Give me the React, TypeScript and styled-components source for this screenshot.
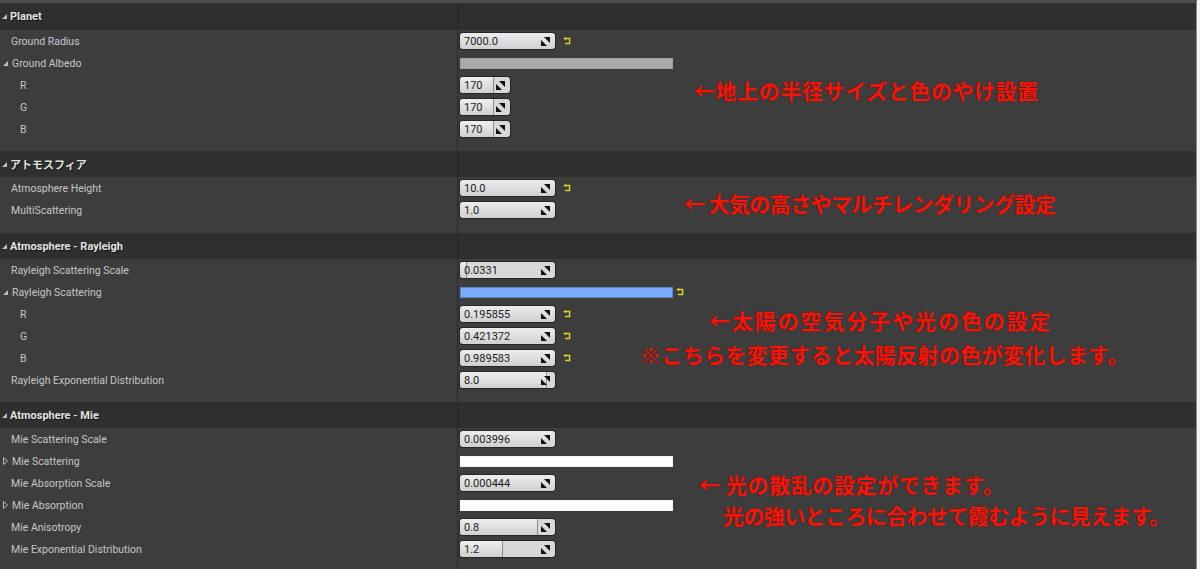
import styled, { createGlobalStyle } from "styled-components";

const GlobalStyle = createGlobalStyle`
  html, body { margin: 0; padding: 0; background: #f2f2f2; }
  body { font-family: Roboto, "Noto Sans CJK JP", sans-serif; }
`;

const Panel = styled.div`
  position: relative;
  width: 1197px;
  height: 569px;
  box-sizing: border-box;
  overflow: hidden;
  background: #3d3d3d;
  border-top: 3px solid #4e4e4e;
  border-right: 1px solid #8c8c8c;
`;

const HeaderRow = styled.div<{ $h: number }>`
  display: grid;
  grid-template-columns: 458px 1fr;
  height: ${(p) => p.$h}px;
  background: #2f2f2f;
`;

const HeaderLabel = styled.div`
  display: flex;
  align-items: center;
  gap: 3px;
  padding-left: 2px;
  border-right: 1px solid #242424;
  font-size: 11px;
  font-weight: 700;
  color: #e2e2e2;
  text-shadow: 1px 1px 0 #151515;
`;

const Row = styled.div<{ $h?: number }>`
  display: grid;
  grid-template-columns: 458px 1fr;
  height: ${(p) => p.$h ?? 22}px;
`;

const LabelCell = styled.div<{ $indent: number }>`
  display: flex;
  align-items: center;
  gap: 4px;
  padding-left: ${(p) => p.$indent}px;
  border-right: 1px solid #2a2a2a;
  font-size: 10.5px;
  color: #c6c6c6;
`;

const ValueCell = styled.div`
  display: flex;
  align-items: center;
  gap: 8px;
  padding-left: 2px;
`;

const SpinBox = styled.div<{ $w: number; $plain: boolean }>`
  position: relative;
  width: ${(p) => p.$w}px;
  height: 16px;
  box-sizing: border-box;
  display: flex;
  align-items: center;
  justify-content: space-between;
  padding: 0 5px 0 4px;
  border-radius: 3px;
  overflow: hidden;
  background: ${(p) =>
    p.$plain ? "linear-gradient(#ececec, #d0d0d0)" : "#d8d8d8"};
  box-shadow: 0 0 0 1px #262626;
`;

const SpinFill = styled.div`
  position: absolute;
  left: 0;
  top: 0;
  bottom: 0;
  background: linear-gradient(#efefef, #d0d0d0);
  border-right: 1px solid #8e8e8e;
`;

const SpinValue = styled.span`
  position: relative;
  font-size: 11px;
  color: #1c1c1c;
`;

const ColorBar = styled.div<{ $color: string; $edge: string }>`
  width: 213px;
  height: 11px;
  box-sizing: border-box;
  background: ${(p) => p.$color};
  border: 1px solid ${(p) => p.$edge};
`;

const BarWrap = styled.div`
  display: flex;
  align-items: center;
  gap: 3px;
`;

const Annotation = styled.div<{ $x: number; $y: number; $ls: number }>`
  position: absolute;
  left: ${(p) => p.$x}px;
  top: ${(p) => p.$y}px;
  font-family: "Noto Sans CJK JP", sans-serif;
  font-size: 21px;
  font-weight: 700;
  letter-spacing: ${(p) => p.$ls}px;
  line-height: 1;
  white-space: nowrap;
  color: #fa1407;
  text-shadow: 0 0 1px #4a0804;
`;

function DragIcon() {
  return (
    <svg width="9" height="9" viewBox="0 0 9 9" style={{ position: "relative" }}>
      <polygon points="3,0 9,0 9,6" fill="#111" />
      <polygon points="0,3 0,9 6,9" fill="#111" />
    </svg>
  );
}

function ResetIcon() {
  return (
    <svg width="8" height="8" viewBox="0 0 8 8">
      <path d="M3 1.6 H6.6 V6.4 H2" fill="none" stroke="#d9d41c" strokeWidth="1.5" />
      <polygon points="0,1.6 3.2,0 3.2,3.2" fill="#d9d41c" />
    </svg>
  );
}

function Expanded() {
  return (
    <svg width="5" height="5" viewBox="0 0 5 5">
      <polygon points="5,0 5,5 0,5" fill="#bdbdbd" />
    </svg>
  );
}

function Collapsed() {
  return (
    <svg width="5" height="8" viewBox="0 0 5 8">
      <polygon points="0.5,0.5 4.5,4 0.5,7.5" fill="none" stroke="#bdbdbd" strokeWidth="1" />
    </svg>
  );
}

type Value =
  | { kind: "spin"; value: string; w?: number; fill?: number; reset?: boolean }
  | { kind: "color"; color: string; edge: string; reset?: boolean };

type Prop = {
  label: string;
  indent?: number;
  arrow?: "open" | "closed";
  value: Value;
};

type Category = { title: string; rows: Prop[]; head: number; gap: number };

const categories: Category[] = [
  {
    title: "Planet",
    head: 27,
    gap: 11,
    rows: [
      { label: "Ground Radius", value: { kind: "spin", value: "7000.0", reset: true } },
      { label: "Ground Albedo", arrow: "open", value: { kind: "color", color: "#aaaaaa", edge: "#a0a0a0" } },
      { label: "R", indent: 20, value: { kind: "spin", value: "170", w: 50, fill: 66.7 } },
      { label: "G", indent: 20, value: { kind: "spin", value: "170", w: 50, fill: 66.7 } },
      { label: "B", indent: 20, value: { kind: "spin", value: "170", w: 50, fill: 66.7 } },
    ],
  },
  {
    title: "アトモスフィア",
    head: 26,
    gap: 12,
    rows: [
      { label: "Atmosphere Height", value: { kind: "spin", value: "10.0", reset: true } },
      { label: "MultiScattering", value: { kind: "spin", value: "1.0" } },
    ],
  },
  {
    title: "Atmosphere - Rayleigh",
    head: 26,
    gap: 11,
    rows: [
      { label: "Rayleigh Scattering Scale", value: { kind: "spin", value: "0.0331", fill: 6 } },
      { label: "Rayleigh Scattering", arrow: "open", value: { kind: "color", color: "#7aaaf9", edge: "#5b86cf", reset: true } },
      { label: "R", indent: 20, value: { kind: "spin", value: "0.195855", reset: true } },
      { label: "G", indent: 20, value: { kind: "spin", value: "0.421372", reset: true } },
      { label: "B", indent: 20, value: { kind: "spin", value: "0.989583", reset: true } },
      { label: "Rayleigh Exponential Distribution", value: { kind: "spin", value: "8.0", fill: 91 } },
    ],
  },
  {
    title: "Atmosphere - Mie",
    head: 26,
    gap: 9,
    rows: [
      { label: "Mie Scattering Scale", value: { kind: "spin", value: "0.003996" } },
      { label: "Mie Scattering", arrow: "closed", value: { kind: "color", color: "#ffffff", edge: "#f4f4f4" } },
      { label: "Mie Absorption Scale", value: { kind: "spin", value: "0.000444" } },
      { label: "Mie Absorption", arrow: "closed", value: { kind: "color", color: "#ffffff", edge: "#f4f4f4" } },
      { label: "Mie Anisotropy", value: { kind: "spin", value: "0.8", fill: 81 } },
      { label: "Mie Exponential Distribution", value: { kind: "spin", value: "1.2", fill: 44 } },
    ],
  },
];

const notes = [
  { x: 694, y: 77, ls: 0.6, text: "←地上の半径サイズと色のやけ設置" },
  { x: 684, y: 190, ls: -0.6, text: "← 大気の高さやマルチレンダリング設定" },
  { x: 709, y: 307, ls: 1.9, text: "←太陽の空気分子や光の色の設定" },
  { x: 640, y: 341, ls: 0.35, text: "※こちらを変更すると太陽反射の色が変化します。" },
  { x: 699, y: 471, ls: 0.6, text: "← 光の散乱の設定ができます。" },
  { x: 723, y: 502, ls: -0.6, text: "光の強いところに合わせて霞むように見えます。" },
];

function ValueView({ v }: { v: Value }) {
  if (v.kind === "color") {
    return (
      <BarWrap>
        <ColorBar $color={v.color} $edge={v.edge} />
        {v.reset && <ResetIcon />}
      </BarWrap>
    );
  }
  return (
    <>
      <SpinBox $w={v.w ?? 95} $plain={v.fill === undefined}>
        {v.fill !== undefined && <SpinFill style={{ width: `${v.fill}%` }} />}
        <SpinValue>{v.value}</SpinValue>
        <DragIcon />
      </SpinBox>
      {v.reset && <ResetIcon />}
    </>
  );
}

export default function App() {
  return (
    <>
      <GlobalStyle />
      <Panel>
        {categories.map((cat) => (
          <section key={cat.title}>
            <HeaderRow $h={cat.head}>
              <HeaderLabel>
                <Expanded />
                {cat.title}
              </HeaderLabel>
              <div />
            </HeaderRow>
            {cat.rows.map((row, ri) => (
              <Row key={ri}>
                <LabelCell $indent={row.arrow ? 3 : row.indent ?? 11}>
                  {row.arrow === "open" && <Expanded />}
                  {row.arrow === "closed" && <Collapsed />}
                  {row.label}
                </LabelCell>
                <ValueCell>
                  <ValueView v={row.value} />
                </ValueCell>
              </Row>
            ))}
            <Row $h={cat.gap}>
              <LabelCell $indent={0} />
              <div />
            </Row>
          </section>
        ))}
        {notes.map((n) => (
          <Annotation key={n.text} $x={n.x} $y={n.y} $ls={n.ls}>
            {n.text}
          </Annotation>
        ))}
      </Panel>
    </>
  );
}
